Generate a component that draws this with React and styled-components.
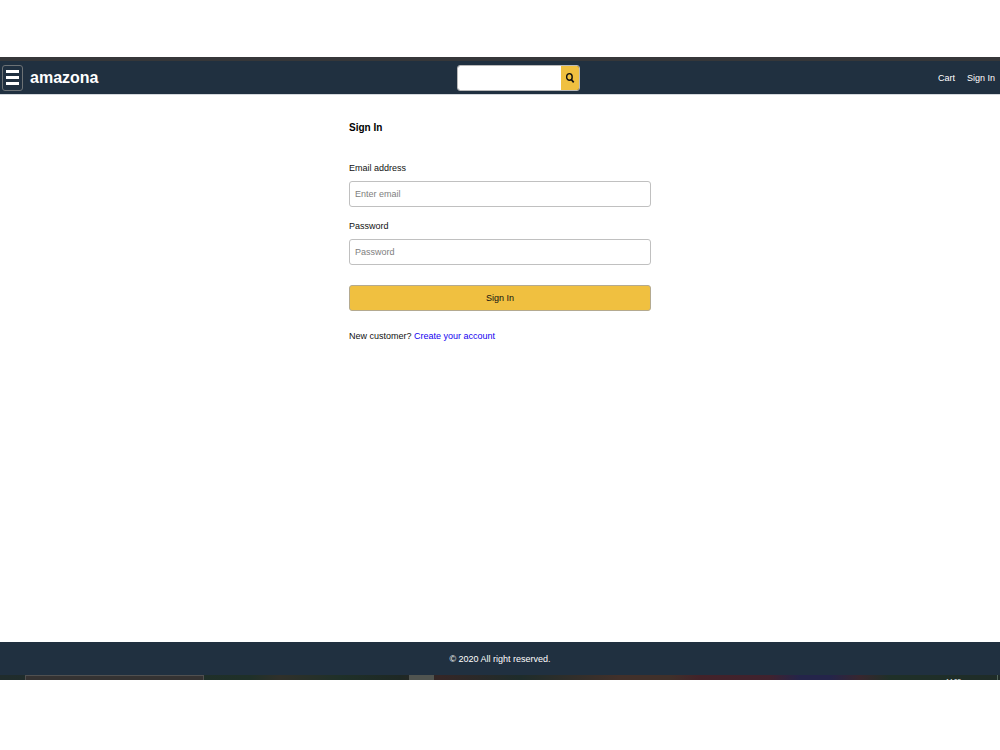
import React from "react";
import styled, { createGlobalStyle } from "styled-components";

const GlobalStyle = createGlobalStyle`
  * { box-sizing: border-box; }
  body {
    margin: 0;
    background: #ffffff;
    color: #111111;
    font-family: "Liberation Sans", Arial, sans-serif;
    font-size: 9px;
    line-height: 12px;
  }
  input, button { font: inherit; color: inherit; }
`;

const Page = styled.div`
  min-height: 100vh;
  padding: 57px 0 70px;
  display: flex;
  flex-direction: column;
`;

const TopEdge = styled.div`
  height: 4px;
  background: #363739;
`;

const Header = styled.header`
  display: flex;
  align-items: center;
  justify-content: space-between;
  height: 34px;
  padding: 0 5px 0 2px;
  background: #203040;
  border-bottom: 1px solid #d4d8dc;
  color: #ffffff;
`;

const Brand = styled.div`
  display: flex;
  align-items: center;
  gap: 7px;
`;

const MenuButton = styled.button`
  display: flex;
  align-items: center;
  justify-content: center;
  width: 21px;
  height: 26px;
  padding: 0;
  border: 1px solid #6d7275;
  border-radius: 3px;
  background: transparent;
`;

const Logo = styled.a`
  color: #ffffff;
  font-size: 16px;
  line-height: 24px;
  font-weight: bold;
  text-decoration: none;
`;

const Search = styled.form`
  display: flex;
  height: 26px;
  border: 1px solid #b9b9b9;
  border-radius: 3px;
  overflow: hidden;
`;

const SearchInput = styled.input`
  width: 103px;
  padding: 0 5px;
  border: 0;
  background: #ffffff;
  color: #111111;
`;

const SearchButton = styled.button`
  display: flex;
  align-items: center;
  justify-content: center;
  width: 18px;
  padding: 0;
  border: 0;
  background: #f0c040;
`;

const Nav = styled.nav`
  display: flex;
  gap: 12px;
`;

const NavLink = styled.a`
  color: #ffffff;
  text-decoration: none;
`;

const Main = styled.main`
  flex: 1;
  padding: 27px 16px;
`;

const Form = styled.form`
  display: flex;
  flex-direction: column;
  width: 100%;
  max-width: 302px;
  margin: 0 auto;
`;

const Title = styled.h1`
  margin: 0 0 28px;
  color: #000000;
  font-size: 10px;
  line-height: 12px;
`;

const Field = styled.div`
  display: flex;
  flex-direction: column;
  gap: 7px;
  margin-bottom: 13px;
`;

const TextInput = styled.input`
  height: 26px;
  padding: 0 5px;
  border: 1px solid #c0c0c0;
  border-radius: 3px;
  background: #ffffff;
  &::placeholder { color: #808080; opacity: 1; }
`;

const SubmitButton = styled.button`
  height: 26px;
  margin: 7px 0 19px;
  padding: 0;
  border: 1px solid #b4aa90;
  border-radius: 3px;
  background: #f0c040;
`;

const Note = styled.p`
  margin: 0;
  a { color: #1400f0; text-decoration: none; }
`;

const Footer = styled.footer`
  display: flex;
  align-items: center;
  justify-content: center;
  height: 33px;
  background: #203040;
  color: #ffffff;
`;

const Taskbar = styled.div`
  display: flex;
  height: 5px;
  overflow: hidden;
  background: linear-gradient(90deg, #202c2c 0%, #1f3028 25%, #30302a 28%, #1f3028 34%, #1e2824 40%,
    #352626 44%, #1e2c2a 52%, #42302a 62%, #40302a 67%, #432229 70%, #40222e 77%, #24244a 80%,
    #24244a 83%, #38262e 86%, #1f3028 89%, #1f2c28 100%);
`;

const TaskSearch = styled.div`
  width: 179px;
  margin-left: 25px;
  border: 1px solid #505050;
  border-bottom: 0;
  background: #343232;
`;

const ActiveTask = styled.div`
  width: 25px;
  margin-left: 205px;
  background: #505450;
`;

const Clock = styled.time`
  margin: 3px 36px 0 auto;
  color: #ffffff;
  font-size: 6px;
  line-height: 6px;
`;

const DesktopEdge = styled.div`
  width: 1px;
  margin-right: 2px;
  background: #52665c;
`;

export default function App() {
  return (
    <>
      <GlobalStyle />
      <Page>
        <TopEdge />
        <Header>
          <Brand>
            <MenuButton type="button" aria-label="Open menu">
              <svg width="13" height="16" viewBox="0 0 13 16" fill="#ffffff" aria-hidden="true">
                <path d="M0 0h13v3H0zM0 6h13v3H0zM0 12h13v3H0z" />
              </svg>
            </MenuButton>
            <Logo href="#home">amazona</Logo>
          </Brand>
          <Search onSubmit={(e) => e.preventDefault()}>
            <SearchInput type="text" aria-label="Search" />
            <SearchButton type="submit" aria-label="Search">
              <svg width="10" height="12" viewBox="0 0 10 12" fill="none" stroke="#111111" aria-hidden="true">
                <ellipse cx="4.4" cy="4.9" rx="2.8" ry="3.3" strokeWidth="1.4" />
                <path d="M6.1 7.3L8.7 10.4" strokeWidth="1.7" />
              </svg>
            </SearchButton>
          </Search>
          <Nav>
            <NavLink href="#cart">Cart</NavLink>
            <NavLink href="#signin">Sign In</NavLink>
          </Nav>
        </Header>
        <Main>
          <Form onSubmit={(e) => e.preventDefault()}>
            <Title>Sign In</Title>
            <Field>
              <label htmlFor="email">Email address</label>
              <TextInput id="email" type="email" placeholder="Enter email" />
            </Field>
            <Field>
              <label htmlFor="password">Password</label>
              <TextInput id="password" type="password" placeholder="Password" />
            </Field>
            <SubmitButton type="submit">Sign In</SubmitButton>
            <Note>
              New customer? <a href="#register">Create your account</a>
            </Note>
          </Form>
        </Main>
        <Footer>© 2020 All right reserved.</Footer>
        <Taskbar>
          <TaskSearch />
          <ActiveTask />
          <Clock>14:55</Clock>
          <DesktopEdge />
        </Taskbar>
      </Page>
    </>
  );
}
